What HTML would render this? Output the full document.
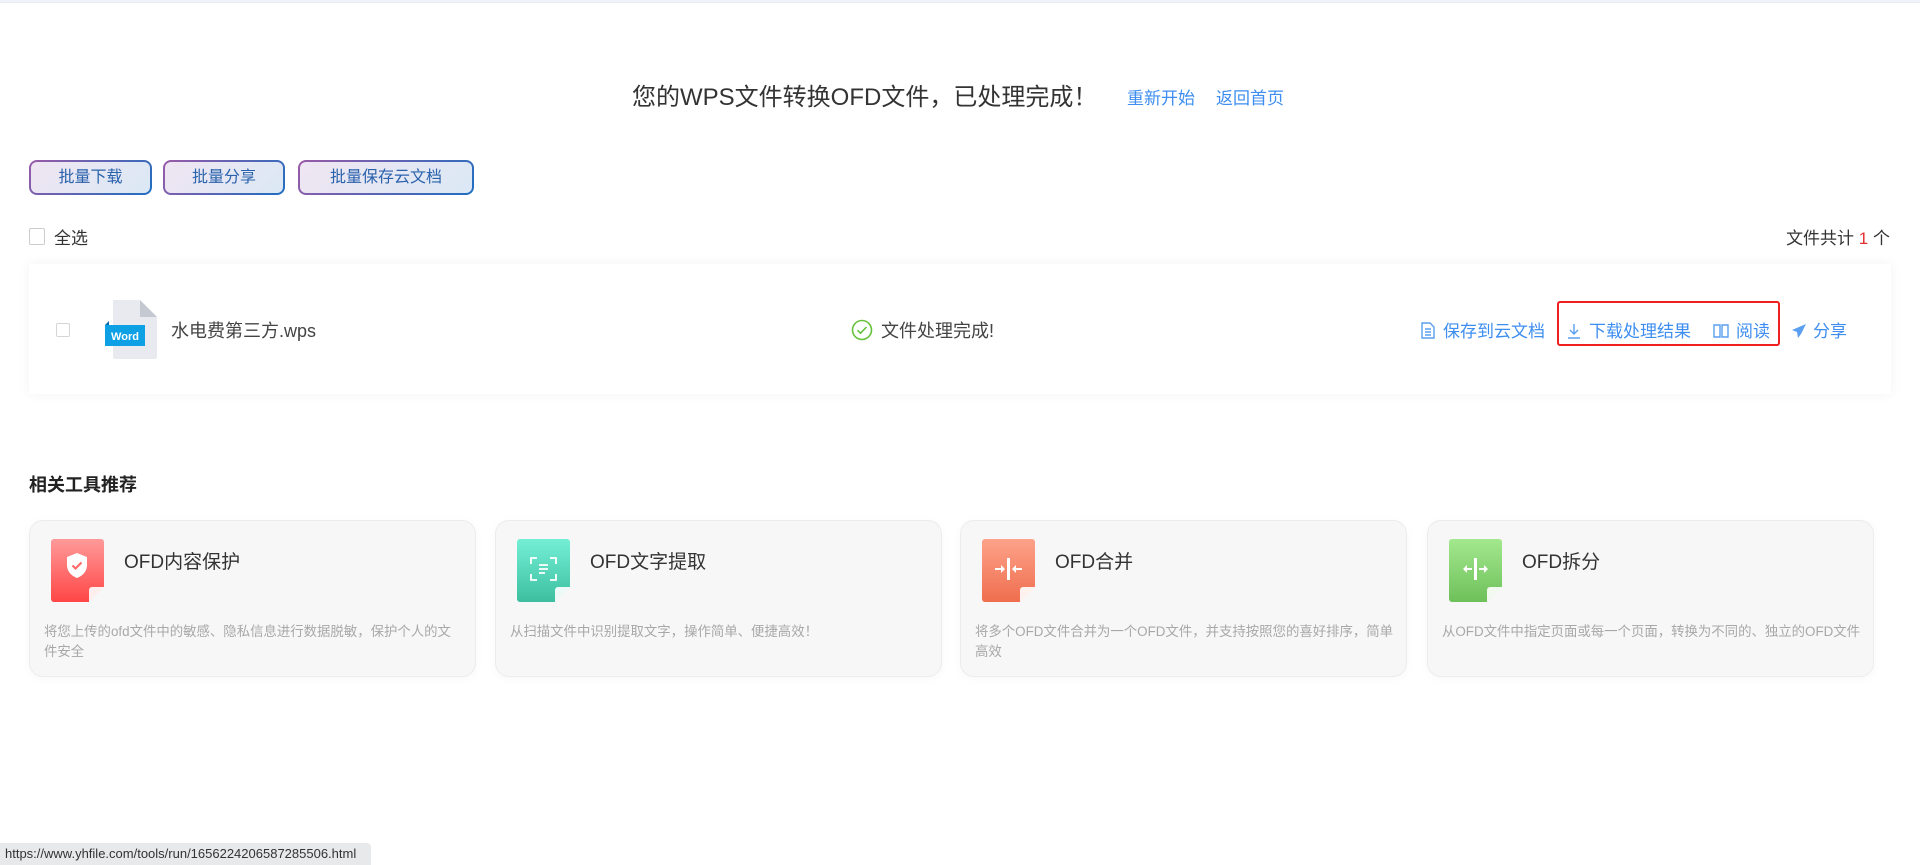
<!DOCTYPE html>
<html><head><meta charset="utf-8"><style>
*{margin:0;padding:0;box-sizing:border-box}
body{width:1920px;height:865px;overflow:hidden;background:#fff;font-family:"Liberation Sans","Noto Sans CJK SC",sans-serif;position:relative;color:#333}
.a{position:absolute;white-space:nowrap}
.btn{position:absolute;top:160px;height:35px;border-radius:8px;padding:2px;background:linear-gradient(135deg,#9a5aa8,#1f6fc0)}
.btn div{width:100%;height:100%;border-radius:6px;background:linear-gradient(135deg,#efe6f2,#dbe8f5);color:#2a62ac;font-size:16px;text-align:center;line-height:31px}
.lnk{color:#3d8ef0;font-size:17px}
.card{position:absolute;top:520px;width:447px;height:157px;background:#f7f7f7;border:1px solid #ececec;border-radius:14px;box-shadow:0 2px 10px rgba(0,0,0,.03)}
.card .ic{position:absolute;left:21px;top:18px;width:53px;height:63px;border-radius:3px}
.card .ic:after{content:"";position:absolute;right:0;bottom:0;width:15px;height:15px;background:linear-gradient(135deg,rgba(255,255,255,.9) 50%,#f7f7f7 50%);border-top-left-radius:3px}
.card .t{position:absolute;left:94px;top:26px;font-size:19px;color:#333}
.card .d{position:absolute;left:14px;top:101px;right:12px;font-size:13.4px;line-height:20px;color:#a8a8a8;white-space:normal}
</style></head><body>
<div class="a" style="left:0;top:0;width:1920px;height:3px;background:#f2f3fa;border-bottom:1px solid #e8eaf4"></div>
<div class="a" style="left:632px;top:77px;font-size:24px;color:#333">您的WPS文件转换OFD文件，已处理完成！</div>
<div class="a lnk" style="left:1127px;top:84px">重新开始</div>
<div class="a lnk" style="left:1216px;top:84px">返回首页</div>
<div class="btn" style="left:29px;width:123px"><div>批量下载</div></div>
<div class="btn" style="left:163px;width:122px"><div>批量分享</div></div>
<div class="btn" style="left:298px;width:176px"><div>批量保存云文档</div></div>
<div class="a" style="left:29px;top:228px;width:16px;height:17px;border:1px solid #ccc;border-radius:2px"></div>
<div class="a" style="left:54px;top:224px;font-size:17px;color:#333">全选</div>
<div class="a" style="right:30px;top:224px;font-size:17px;color:#333">文件共计 <span style="color:#e63030">1</span> 个</div>
<div class="a" style="left:29px;top:264px;width:1862px;height:130px;background:#fff;box-shadow:0 0 12px rgba(0,0,0,.05)"></div>
<div class="a" style="left:56px;top:323px;width:14px;height:14px;border:1px solid #d5d5d5;border-radius:2px"></div>
<svg class="a" style="left:104px;top:299px" width="54" height="61" viewBox="0 0 54 61"><path d="M9 1h27l17 17v40a2 2 0 0 1-2 2H11a2 2 0 0 1-2-2z" fill="#e8eaef"/><path d="M36 1l17 17H36z" fill="#c4c8d0"/><path d="M1 26l4-4v4z" fill="#0a6aa8"/><rect x="1" y="26" width="40" height="21" fill="#0ea0e4"/><text x="21" y="41" font-size="11" font-weight="bold" fill="#fff" text-anchor="middle" font-family="Liberation Sans">Word</text></svg>
<div class="a" style="left:171px;top:317px;font-size:18px;color:#444">水电费第三方.wps</div>
<svg class="a" style="left:851px;top:319px" width="22" height="22" viewBox="0 0 22 22"><circle cx="11" cy="11" r="9.5" fill="none" stroke="#67c23a" stroke-width="1.6"/><path d="M6.5 11.2l3 3 6-6.2" fill="none" stroke="#67c23a" stroke-width="1.6"/></svg>
<div class="a" style="left:881px;top:317px;font-size:18px;color:#444">文件处理完成!</div>
<svg class="a" style="left:1421px;top:322px" width="14" height="17" viewBox="0 0 14 17"><path d="M1 1h8l4 4v11H1z M4 7h6M4 10h6M4 13h6" fill="none" stroke="#5a9ff0" stroke-width="1.4"/></svg>
<div class="a lnk" style="left:1443px;top:317px">保存到云文档</div>
<div class="a" style="left:1557px;top:301px;width:223px;height:45px;border:2px solid #f02020;border-radius:3px"></div>
<svg class="a" style="left:1567px;top:323px" width="14" height="16" viewBox="0 0 14 16"><path d="M7 1v10M3 7l4 4 4-4M1 15h12" fill="none" stroke="#5a9ff0" stroke-width="1.4"/></svg>
<div class="a lnk" style="left:1589px;top:317px">下载处理结果</div>
<svg class="a" style="left:1713px;top:324px" width="16" height="14" viewBox="0 0 16 14"><path d="M1 1h6v12H1zM9 1h6v12H9z" fill="none" stroke="#5a9ff0" stroke-width="1.4"/></svg>
<div class="a lnk" style="left:1736px;top:317px">阅读</div>
<svg class="a" style="left:1791px;top:323px" width="16" height="16" viewBox="0 0 16 16"><path d="M15 1L1 7l5 2 1 6 3-4 5-10z" fill="#5a9ff0"/></svg>
<div class="a lnk" style="left:1813px;top:317px">分享</div>
<div class="a" style="left:29px;top:471px;font-size:18px;font-weight:bold;color:#222">相关工具推荐</div>
<div class="card" style="left:29px"><div class="ic" style="background:linear-gradient(#ff9a9a,#ff4646)"><svg style="position:absolute;left:14px;top:13px" width="24" height="28" viewBox="0 0 24 28"><path d="M12 1l10 4v8c0 7-5 11-10 13C7 24 2 20 2 13V5z" fill="#fff"/><path d="M7.5 13.5l3 3 6-6" fill="none" stroke="#ff6a6a" stroke-width="2.2"/></svg></div><div class="t">OFD内容保护</div><div class="d">将您上传的ofd文件中的敏感、隐私信息进行数据脱敏，保护个人的文件安全</div></div>
<div class="card" style="left:495px"><div class="ic" style="background:linear-gradient(#74efd6,#3dbf9f)"><svg style="position:absolute;left:13px;top:18px" width="27" height="24" viewBox="0 0 27 24" fill="none" stroke="#fff" stroke-width="1.8"><path d="M1 7V1h6M20 1h6v6M26 17v6h-6M7 23H1v-6M9 8h9M9 12h9M9 16h6"/></svg></div><div class="t">OFD文字提取</div><div class="d">从扫描文件中识别提取文字，操作简单、便捷高效！</div></div>
<div class="card" style="left:960px"><div class="ic" style="background:linear-gradient(#fda28a,#ef6e4e)"><svg style="position:absolute;left:12px;top:18px" width="29" height="24" viewBox="0 0 29 24" fill="#fff"><rect x="13" y="1" width="3" height="22"/><path d="M1 11h6V8l4 4-4 4v-3H1zM28 11h-6V8l-4 4 4 4v-3h6z"/></svg></div><div class="t">OFD合并</div><div class="d">将多个OFD文件合并为一个OFD文件，并支持按照您的喜好排序，简单高效</div></div>
<div class="card" style="left:1427px"><div class="ic" style="background:linear-gradient(#a3e88e,#6ec05a)"><svg style="position:absolute;left:12px;top:18px" width="29" height="24" viewBox="0 0 29 24" fill="#fff"><rect x="13" y="1" width="3" height="22"/><path d="M11 11H6V8l-4 4 4 4v-3h5zM18 11h5V8l4 4-4 4v-3h-5z"/></svg></div><div class="t">OFD拆分</div><div class="d">从OFD文件中指定页面或每一个页面，转换为不同的、独立的OFD文件</div></div>
<div class="a" style="left:0;top:843px;width:371px;height:22px;background:#e8e9eb;border-top-right-radius:4px;font-size:13px;line-height:22px;padding-left:5px;color:#333">https://www.yhfile.com/tools/run/1656224206587285506.html</div>
</body></html>
